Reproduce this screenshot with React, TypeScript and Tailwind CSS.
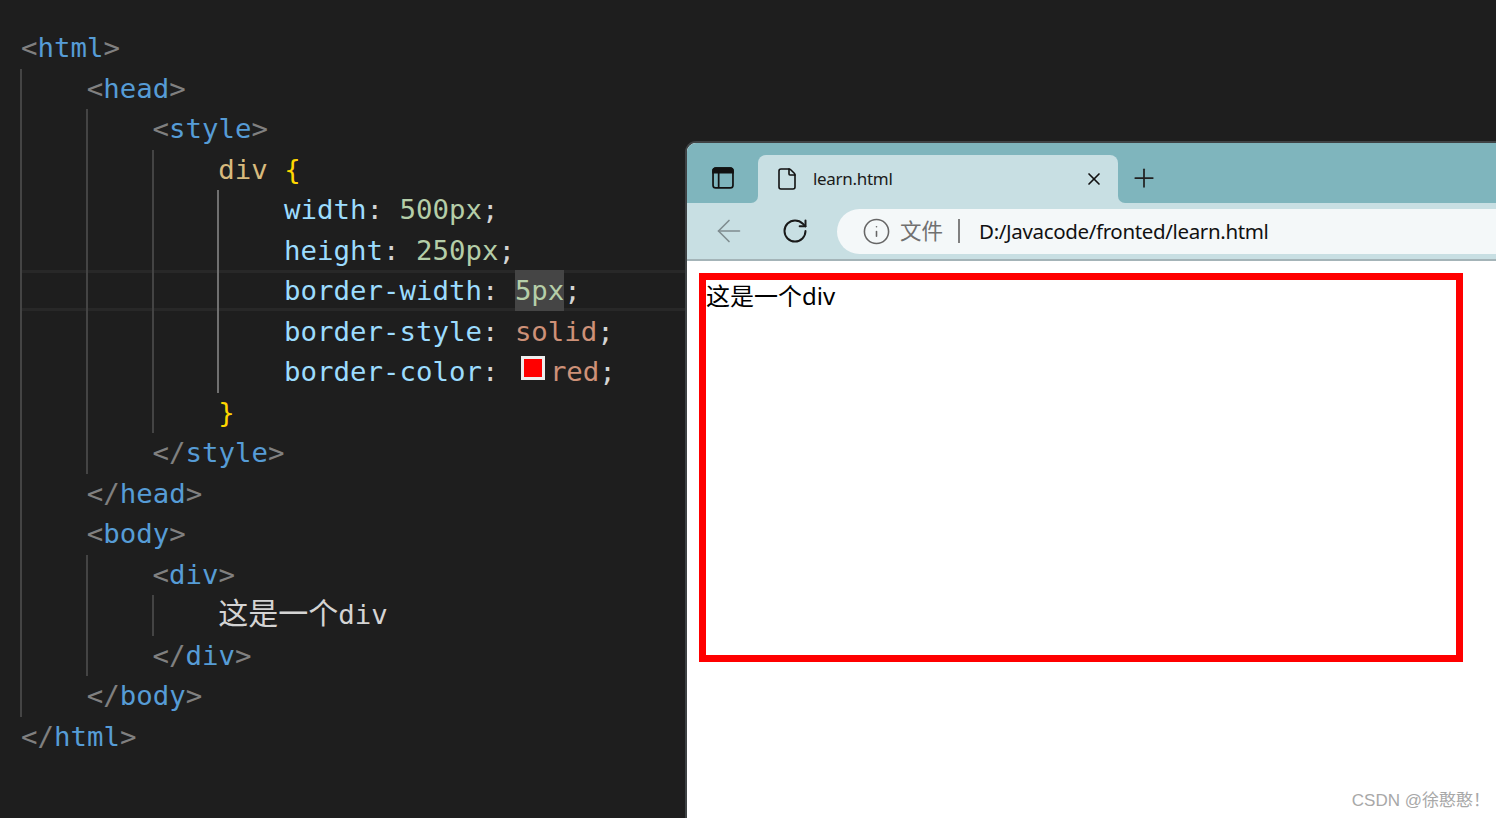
import { ArrowLeft, File, Info, Plus, RotateCw, X } from "lucide-react";
import type { ReactNode } from "react";

const Tag = ({ children }: { children: ReactNode }) => (
  <div className="h-[40.5px] leading-[40.5px] whitespace-pre">
    <span className="text-[#808080]">&lt;</span>
    <span className="text-[#569cd6]">{children}</span>
    <span className="text-[#808080]">&gt;</span>
  </div>
);

const CloseTag = ({ children }: { children: ReactNode }) => (
  <div className="h-[40.5px] leading-[40.5px] whitespace-pre">
    <span className="text-[#808080]">&lt;/</span>
    <span className="text-[#569cd6]">{children}</span>
    <span className="text-[#808080]">&gt;</span>
  </div>
);

// indented block with the editor's guide line on the left
const Block = ({ children, active }: { children: ReactNode; active?: boolean }) => (
  <div className={active ? "-ml-px border-l-2 border-[#707070] pl-[64.75px]" : "-ml-px border-l-2 border-[#444444] pl-[64.75px]"}>
    {children}
  </div>
);

const Prop = ({ name, children }: { name: string; children: ReactNode }) => (
  <div className="h-[40.5px] leading-[40.5px] whitespace-pre">
    <span className="text-[#9cdcfe]">{name}</span>
    <span className="text-[#d4d4d4]">: </span>
    {children}
    <span className="text-[#d4d4d4]">;</span>
  </div>
);

const Code = () => (
  <div className="relative w-[685px] shrink-0 pt-[28px] pl-[21px] font-['DejaVu_Sans_Mono',monospace] text-[27.4px]">
    {/* current line highlight */}
    <div className="absolute left-[21px] right-0 top-[270px] h-[41px] border-y-[3px] border-[#282828]" />
    <div className="relative">
      <Tag>html</Tag>
      <Block>
        <Tag>head</Tag>
        <Block>
          <Tag>style</Tag>
          <Block>
            <div className="h-[40.5px] leading-[40.5px] whitespace-pre">
              <span className="text-[#d7ba7d]">div </span>
              <span className="text-[#ffd700]">{"{"}</span>
            </div>
            <Block active>
              <Prop name="width"><span className="text-[#b5cea8]">500px</span></Prop>
              <Prop name="height"><span className="text-[#b5cea8]">250px</span></Prop>
              <Prop name="border-width"><span className="bg-[#454545] py-[5px] text-[#b5cea8]">5px</span></Prop>
              <Prop name="border-style"><span className="text-[#ce9178]">solid</span></Prop>
              <Prop name="border-color">
                <span className="ml-[6px] mr-[5px] inline-block h-[24px] w-[24px] border-[3px] border-[#eeeeee] bg-[#ff0000] align-[1px]" />
                <span className="text-[#ce9178]">red</span>
              </Prop>
            </Block>
            <div className="h-[40.5px] leading-[40.5px] text-[#ffd700]">{"}"}</div>
          </Block>
          <CloseTag>style</CloseTag>
        </Block>
        <CloseTag>head</CloseTag>
        <Tag>body</Tag>
        <Block>
          <Tag>div</Tag>
          <Block>
            <div className="h-[40.5px] leading-[40.5px] text-[#d4d4d4] whitespace-pre">
              <span className="font-['Noto_Sans_CJK_SC',sans-serif] text-[30px] leading-none">这是一个</span>div
            </div>
          </Block>
          <CloseTag>div</CloseTag>
        </Block>
        <CloseTag>body</CloseTag>
      </Block>
      <CloseTag>html</CloseTag>
    </div>
  </div>
);

const Browser = () => (
  <div className="relative mt-[141px] flex min-w-0 flex-1 flex-col overflow-hidden rounded-tl-[11px] border-t-2 border-l-2 border-[#3f4345] bg-white font-['Noto_Sans','Noto_Sans_CJK_SC',sans-serif]">
    {/* tab strip */}
    <div className="flex h-[60px] shrink-0 bg-[#c8dfe3]">
      <div className="flex w-[71px] items-center justify-center rounded-br-[7px] bg-[#7fb5bd] pt-[10px]">
        <svg width="26" height="26" viewBox="0 0 24 24" fill="none" stroke="#111" strokeWidth="1.6">
          <rect x="2.8" y="2.8" width="18.4" height="18.4" rx="2.5" />
          <path d="M2.8 5.5a2.7 2.7 0 0 1 2.7-2.7h13a2.7 2.7 0 0 1 2.7 2.7V7H2.8z" fill="#111" />
          <path d="M8 7v14" />
        </svg>
      </div>
      <div className="flex w-[360px] flex-col bg-[#7fb5bd]">
        <div className="h-[12px]" />
        <div className="flex flex-1 items-center rounded-t-[8px] bg-[#c8dfe3] pl-[17px] pr-[14px]">
          <File size={24} strokeWidth={1.6} color="#111" />
          <span className="ml-[14px] flex-1 text-[17px] tracking-[-0.3px] text-[#1a1a1a]">learn.html</span>
          <X size={20} strokeWidth={2} color="#111" />
        </div>
      </div>
      <div className="flex flex-1 items-center rounded-bl-[7px] bg-[#7fb5bd] pl-[11px] pt-[10px]">
        <Plus size={30} strokeWidth={1.4} color="#222" />
      </div>
    </div>
    {/* toolbar */}
    <div className="flex h-[58px] shrink-0 items-center border-b-2 border-[#a4b4b8] bg-[#c8dfe3]">
      <ArrowLeft size={36} strokeWidth={1.1} color="#7f8c90" className="ml-[24px]" />
      <RotateCw size={28} strokeWidth={1.7} color="#1a1a1a" className="ml-[34px]" />
      <div className="ml-[28px] flex h-[45px] flex-1 items-center rounded-l-full bg-[#f4f8f9] pl-[24.5px]">
        <Info size={29} strokeWidth={1.3} color="#666" />
        <span className="ml-[9.5px] text-[21.5px] text-[#707070]">文件</span>
        <span className="ml-[15px] h-[24px] w-[2px] bg-[#808080]" />
        <span className="ml-[19px] whitespace-nowrap text-[20.5px] tracking-[-0.35px] text-[#111]">D:/Javacode/fronted/learn.html</span>
      </div>
    </div>
    {/* page */}
    <div className="flex-1 pl-[12px] pt-[12px]">
      <div className="h-[389px] w-[764px] border-[7px] border-[#ff0000] text-[24px] leading-[32px] text-black">这是一个div</div>
    </div>
    <div className="absolute bottom-[5px] right-[6px] font-['Liberation_Sans','Noto_Sans_CJK_SC',sans-serif] text-[17px] text-[#a8a8a8]">CSDN @徐憨憨！</div>
  </div>
);

export default function App() {
  return (
    <div className="flex h-[818px] w-[1496px] overflow-hidden bg-[#1e1e1e]">
      <Code />
      <Browser />
    </div>
  );
}
